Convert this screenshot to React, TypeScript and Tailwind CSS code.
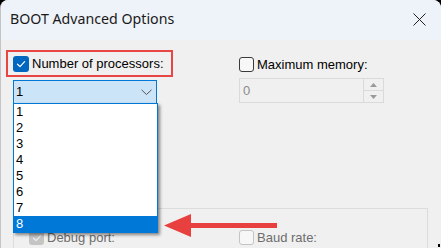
const items = ["1", "2", "3", "4", "5", "6", "7", "8"];

const Check = ({ color }: { color: string }) => (
  <svg width="10" height="10" viewBox="0 0 10 10" fill="none">
    <path d="M1.5 5.2 L4 7.6 L8.6 2.6" stroke={color} strokeWidth="1.2" strokeLinecap="round" strokeLinejoin="round" />
  </svg>
);

const App = () => {
  return (
    <div className="w-[441px] h-[248px] bg-black overflow-hidden">
      <div className="relative w-full h-full rounded-t-[8px] bg-[#f0f0f0] border-l border-[#c4c4c4] overflow-hidden font-['Liberation_Sans',Arial,sans-serif] text-[13px] text-black">
        {/* title bar */}
        <div className="h-[40px] bg-[#eef2f9] flex items-center justify-between pl-[9px] pr-[15px]">
          <span className="font-['Noto_Sans',sans-serif] text-[14.2px] text-[#1a1a1a] leading-none pb-[1px]">BOOT Advanced Options</span>
          <svg width="13" height="13" viewBox="0 0 13 13" className="mb-[1px]">
            <path d="M0.5 0.5 L12.5 12.5 M12.5 0.5 L0.5 12.5" stroke="#1f1f1f" strokeWidth="1" />
          </svg>
        </div>

        {/* body */}
        <div className="pt-[10px]">
          <div className="flex">
            <div className="pl-[5px] w-[173px]">
              <div className="w-[167px] h-[27px] border-2 border-[#e84545] flex items-center pl-[5px] gap-[3px]">
                <div className="w-[16px] h-[16px] rounded-[3px] bg-[#0067c0] flex items-center justify-center">
                  <Check color="#ffffff" />
                </div>
                <span>Number of processors:</span>
              </div>
              <div className="relative mt-[3px] ml-[7px] w-[144px] h-[24px] bg-[#cce4f7] border border-[#0078d7] flex items-center justify-between pl-[2px] pr-[4px]">
                <span>1</span>
                <svg width="11" height="7" viewBox="0 0 11 7" fill="none">
                  <path d="M0.5 0.8 L5.5 5.5 L10.5 0.8" stroke="#555" strokeWidth="1" />
                </svg>
                {/* open dropdown list */}
                <div className="absolute left-[-1px] top-[22px] w-[145px] bg-white border border-[#0078d7] shadow-[2px_2px_3px_rgba(0,0,0,0.45)] z-10">
                  {items.map((n) => (
                    <div
                      key={n}
                      className={
                        n === "8"
                          ? "h-[16px] leading-[16px] pl-[2px] bg-[#0078d7] text-white"
                          : "h-[16px] leading-[16px] pl-[2px] text-black"
                      }
                    >
                      {n}
                    </div>
                  ))}
                </div>
              </div>
            </div>

            <div className="ml-[65px] pt-[7px]">
              <div className="flex items-center gap-[3px] h-[15px]">
                <div className="w-[15px] h-[15px] rounded-[3px] border border-[#3a3a3a] bg-[#f7f7f7]" />
                <span>Maximum memory:</span>
              </div>
              <div className="mt-[6px] flex w-[145px] h-[25px]">
                <div className="flex-1 bg-[#f0f0f0] border border-[#dadada] flex items-center pl-[3px] text-[#8c8c8c]">0</div>
                <div className="w-[20px] flex flex-col border border-l-0 border-[#dadada] bg-[#f0f0f0]">
                  <div className="flex-1 flex items-center justify-center border-b border-[#dadada]">
                    <svg width="7" height="4" viewBox="0 0 7 4"><path d="M0 4 L3.5 0 L7 4 Z" fill="#9a9a9a" /></svg>
                  </div>
                  <div className="flex-1 flex items-center justify-center">
                    <svg width="7" height="4" viewBox="0 0 7 4"><path d="M0 0 L3.5 4 L7 0 Z" fill="#9a9a9a" /></svg>
                  </div>
                </div>
              </div>
            </div>
          </div>

          {/* group box behind the list */}
          <div className="mt-[104px] ml-[12px] w-[415px] h-[60px] border border-[#dcdcdc]">
            <div className="flex items-center pt-[19px] pl-[15px]">
              <div className="w-[210px] flex items-center gap-[3px]">
                <div className="w-[15px] h-[15px] rounded-[3px] bg-[#c4c4c4] flex items-center justify-center">
                  <Check color="#efefef" />
                </div>
                <span className="text-[#6d6d6d]">Debug port:</span>
              </div>
              <div className="flex items-center gap-[3px]">
                <div className="w-[15px] h-[15px] rounded-[3px] border border-[#c4c4c4] bg-[#f7f7f7]" />
                <span className="text-[#6d6d6d]">Baud rate:</span>
              </div>
            </div>
          </div>
        </div>

        {/* annotation arrow */}
        <svg className="absolute left-[162px] top-[213px] z-20" width="115" height="25" viewBox="0 0 115 25">
          <path d="M1 12.5 L28 1 L28 24 Z" fill="#e8403f" />
          <rect x="26" y="10" width="88" height="5" fill="#e8403f" />
        </svg>

        <span className="absolute right-[1px] bottom-[1px] w-[2px] h-[3px] bg-black" />
      </div>
    </div>
  );
};

export default App;
